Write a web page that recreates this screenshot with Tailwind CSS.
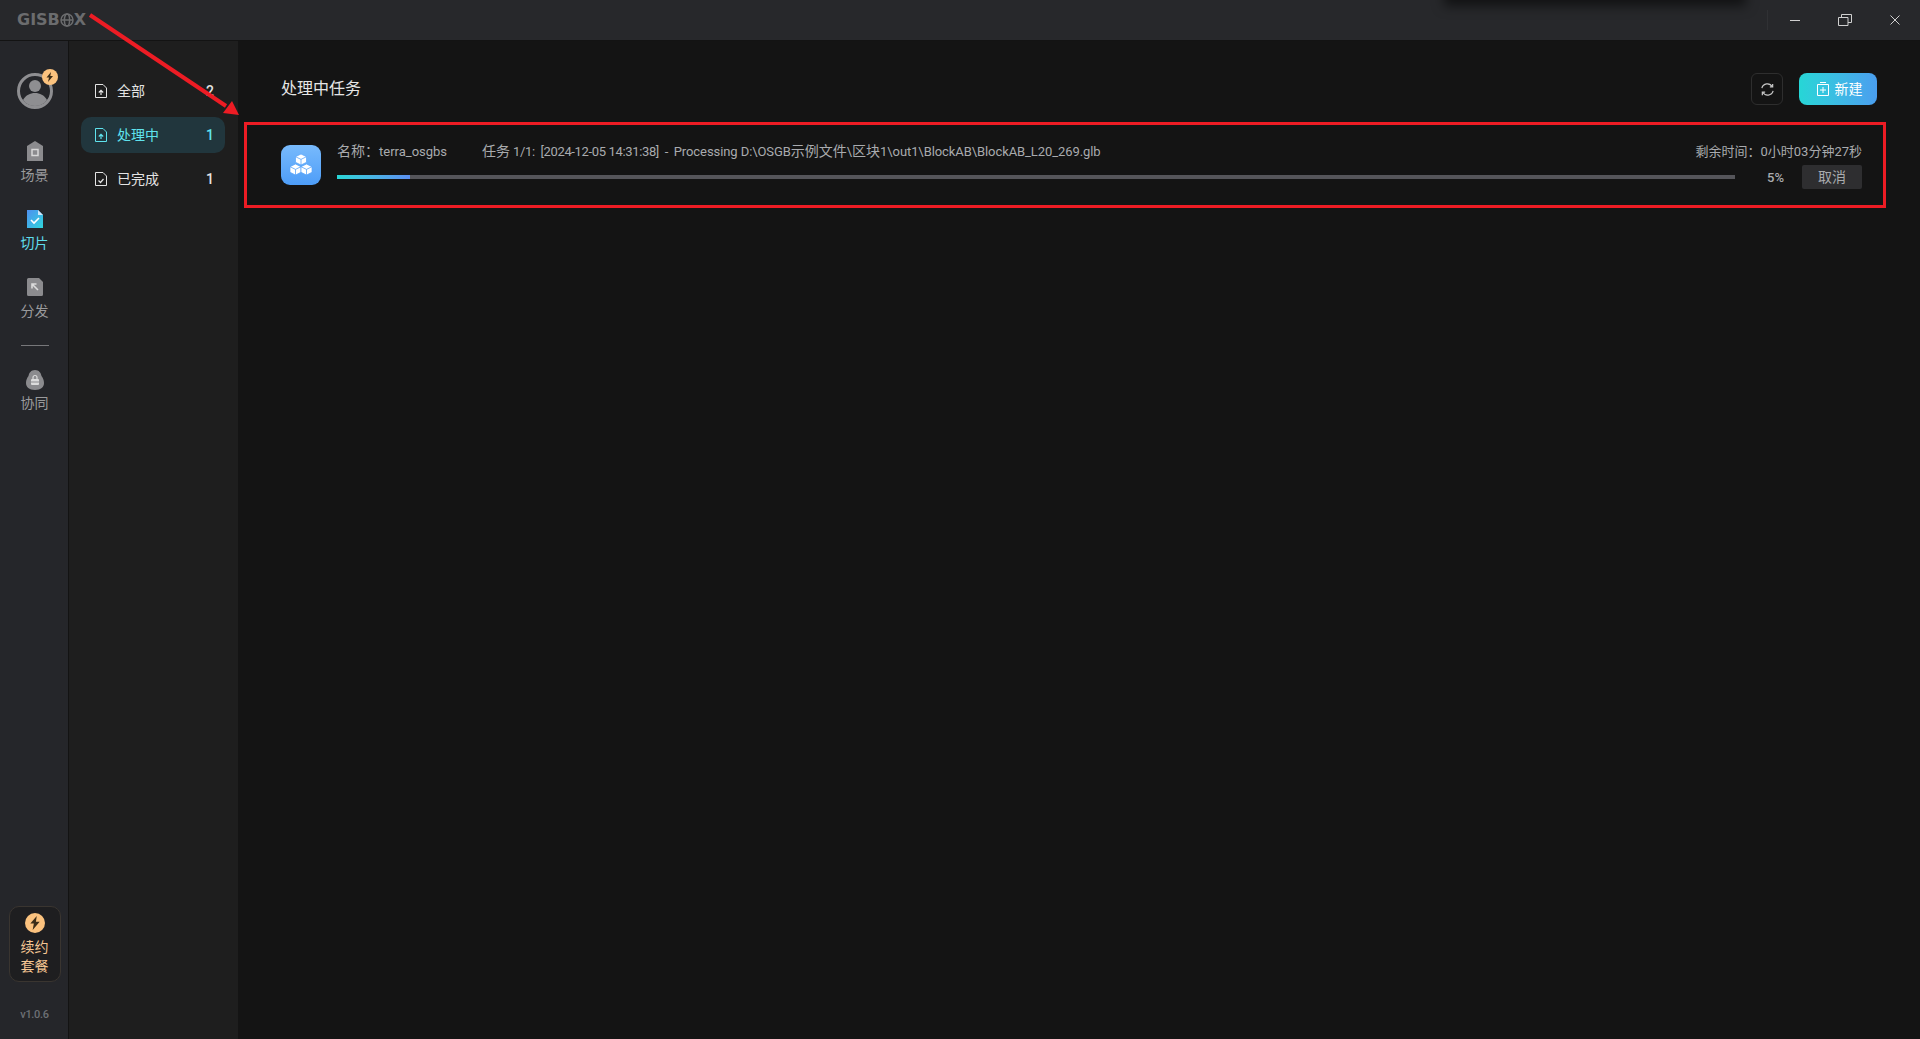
<!DOCTYPE html>
<html lang="zh-CN">
<head>
  <meta charset="UTF-8" />
  <title>GISBox</title>
  <script src="https://cdn.jsdelivr.net/npm/@tailwindcss/browser@4"></script>
</head>
<body class="bg-[#141414] overflow-hidden font-['Roboto','Noto_Sans_CJK_SC',sans-serif]">
  <div class="relative w-[1920px] h-[1039px] flex flex-col overflow-hidden">

    <!-- Title bar -->
    <header class="h-[41px] shrink-0 bg-[#27282b] border-b border-[#131313] flex items-center justify-between">
      <div class="pl-[17px] flex items-center text-[#6b6c6e] text-[16px] leading-none font-bold font-['DejaVu_Sans',sans-serif]">
        <span>GISB</span>
        <svg class="w-[14px] h-[14px]" viewBox="0 0 14 14" fill="none" stroke="#6b6c6e" stroke-width="1.500"><circle cx="7" cy="7" r="6"/><ellipse cx="7" cy="7" rx="2.600" ry="6"/><path d="M1 7h12"/></svg>
        <span>X</span>
      </div>
      <div class="flex items-center text-[#d0d0d0] pr-[20px] gap-[38px]">
        <div class="w-px h-[20px] bg-[#303134] mr-[-16px]"></div>
        <svg class="w-[10px] h-[10px]" viewBox="0 0 10 10" fill="none" stroke="currentColor"><path d="M0 5.500h10"/></svg>
        <svg class="w-[14px] h-[12px]" viewBox="0 0 14 12" fill="none" stroke="currentColor"><path d="M.5 3.500h9.500v8H.5z"/><path d="M3.500 3.500v-3h10v8h-3.500"/></svg>
        <svg class="w-[10px] h-[10px]" viewBox="0 0 10 10" fill="none" stroke="currentColor"><path d="M.5.500l9 9M9.500.500l-9 9"/></svg>
      </div>
    </header>

    <div class="flex flex-1 min-h-0">
      <!-- Icon rail -->
      <nav class="w-[69px] shrink-0 pl-[1px] bg-[#25262a] border-r border-[#131313] flex flex-col items-center text-[14px] leading-[18px] text-[#9a9a9c]">
        <div class="relative mt-[32px] w-[36px] h-[36px]">
          <svg class="w-[36px] h-[36px]" viewBox="0 0 36 36" fill="none"><circle cx="18" cy="18" r="16.500" stroke="#8e8e91" stroke-width="3"/><circle cx="18" cy="13" r="6" fill="#8e8e91"/><path d="M6 27c3-5 7-7 12-7s9 2 12 7c-3 4-7 6-12 6s-9-2-12-6z" fill="#8e8e91"/></svg>
          <span class="absolute -top-[4px] -right-[5px] w-[16px] h-[16px] rounded-full bg-[#fbc27e] flex items-center justify-center">
            <svg class="w-[10px] h-[10px]" viewBox="0 0 10 10" fill="#3b2c17"><path d="M6 0L1.500 5.500h2.500L3 10l5-6H5.300z"/></svg>
          </span>
        </div>

        <div class="mt-[32px] flex flex-col items-center gap-[5px]">
          <svg class="w-[16px] h-[20px]" viewBox="0 0 16 20"><path d="M8 0l8 5v15H0V5z" fill="#8b8b8e"/><rect x="5" y="8.500" width="6" height="6" fill="none" stroke="#d8d8d8" stroke-width="1.500"/></svg>
          <span>场景</span>
        </div>
        <div class="mt-[26px] flex flex-col items-center gap-[6px] text-[#5fdcec]">
          <svg class="w-[16px] h-[18px]" viewBox="0 0 16 18"><defs><linearGradient id="g1" x1="0" y1="0" x2="1" y2="1"><stop offset="0" stop-color="#4f8ff0"/><stop offset="1" stop-color="#2fd6dc"/></linearGradient></defs><path d="M0 0h11l5 5v13H0z" fill="url(#g1)"/><path d="M11 0l5 5h-5z" fill="#cfe6fb"/><path d="M4 10l3 3 5-5" fill="none" stroke="#fff" stroke-width="1.600"/></svg>
          <span>切片</span>
        </div>
        <div class="mt-[26px] flex flex-col items-center gap-[6px]">
          <svg class="w-[16px] h-[18px]" viewBox="0 0 16 18"><path d="M1.500 0H12l4 4v12.500a1.500 1.500 0 0 1-1.500 1.500h-13A1.500 1.500 0 0 1 0 16.500v-15A1.500 1.500 0 0 1 1.500 0z" fill="#8b8b8e"/><path d="M11 12L5 6M5 10.500V6h4.500" fill="none" stroke="#dcdcdc" stroke-width="1.600"/></svg>
          <span>分发</span>
        </div>
        <div class="mt-[25px] w-[28px] h-px bg-[#77777a]"></div>
        <div class="mt-[24px] flex flex-col items-center gap-[4px]">
          <svg class="w-[18px] h-[20px]" viewBox="0 0 18 20"><path d="M9 0c4 0 6 3 6.500 6 1.500 2 2.500 4 2.500 7 0 4-3 7-9 7s-9-3-9-7c0-3 1-5 2.500-7C3 3 5 0 9 0z" fill="#8b8b8e"/><rect x="5" y="9" width="8" height="6" rx="1" fill="#dcdcdc"/><path d="M7 9V7.500a2 2 0 0 1 4 0V9" fill="none" stroke="#dcdcdc" stroke-width="1.200"/><path d="M5 12h8" stroke="#8b8b8e"/></svg>
          <span>协同</span>
        </div>

        <div class="mt-auto w-[52px] h-[76px] rounded-[10px] bg-[#1e1e20] border border-[#3a3530] flex flex-col items-center pt-[6px] text-[#f5c693] leading-[19px]">
          <span class="w-[20px] h-[20px] rounded-full bg-[#fbc27e] flex items-center justify-center mb-[5px]">
            <svg class="w-[12px] h-[14px]" viewBox="0 0 10 12" fill="#3b2c17"><path d="M6.500 0L1 6.500h3L3 12l6-7H5.800z"/></svg>
          </span>
          <span>续约</span>
          <span>套餐</span>
        </div>
        <div class="mt-[26px] mb-[17px] text-[11px] leading-[14px] font-medium tracking-[-0.3px] text-[#6d7075]">v1.0.6</div>
      </nav>

      <!-- Task filter sidebar -->
      <aside class="w-[169px] shrink-0 bg-[#1e1e1e] pl-[12px] pr-[13px] pt-[32px] flex flex-col gap-[8px] text-[14px] text-[#e4e4e4]">
        <div class="h-[36px] rounded-[10px] pl-[14px] pr-[11px] flex items-center justify-between">
          <span class="flex items-center gap-[10px]">
            <svg class="w-[12px] h-[14px]" viewBox="0 0 12 14" fill="none" stroke="currentColor"><path d="M.5.500h7.500l3.500 3.500v9.500h-11z"/><path d="M6 11V6.500M3.800 8.500L6 6.300l2.200 2.200" stroke-width="1.200"/></svg>
            全部
          </span>
          <span class="font-medium">2</span>
        </div>
        <div class="h-[36px] rounded-[10px] pl-[14px] pr-[11px] flex items-center justify-between bg-[#21363d] text-[#5fe3ee]">
          <span class="flex items-center gap-[10px]">
            <svg class="w-[12px] h-[14px]" viewBox="0 0 12 14" fill="none" stroke="currentColor"><path d="M.5.500h7.500l3.500 3.500v9.500h-11z"/><path d="M6 11V6.500M3.800 8.500L6 6.300l2.200 2.200" stroke-width="1.200"/></svg>
            处理中
          </span>
          <span class="font-medium">1</span>
        </div>
        <div class="h-[36px] rounded-[10px] pl-[14px] pr-[11px] flex items-center justify-between">
          <span class="flex items-center gap-[10px]">
            <svg class="w-[12px] h-[14px]" viewBox="0 0 12 14" fill="none" stroke="currentColor"><path d="M.5.500h7.500l3.500 3.500v9.500h-11z"/><path d="M3.500 8.500l2 2 3-3.500" stroke-width="1.200"/></svg>
            已完成
          </span>
          <span class="font-medium">1</span>
        </div>
      </aside>

      <!-- Main -->
      <main class="flex-1 min-w-0 bg-[#141414] pl-[43px] pr-[43px] pt-[32px]">
        <div class="h-[32px] flex items-center justify-between">
          <h1 class="text-[16px] font-normal text-[#e6e6e6]">处理中任务</h1>
          <div class="flex items-center gap-[16px]">
            <button class="w-[32px] h-[32px] rounded-[6px] border border-[#2e2e2e] flex items-center justify-center">
              <svg class="w-[15px] h-[15px]" viewBox="0 0 16 16" fill="none" stroke="#c8c8c8" stroke-width="1.300"><path d="M2 6.500A6 6 0 0 1 13 5M14 9.500A6 6 0 0 1 3 11"/><path d="M13.500 2v3.300h-3M2.500 14v-3.300h3"/></svg>
            </button>
            <button class="w-[78px] h-[32px] rounded-[8px] pl-[3px] bg-linear-to-r from-[#26d6d6] to-[#4a9eef] flex items-center justify-center gap-[6px] text-[14px] text-white">
              <svg class="w-[12px] h-[14px]" viewBox="0 0 12 14" fill="none" stroke="#fff"><path d="M.5 2.500h11v11H.5zM3 .5h6"/><path d="M6 5v6M3 8h6"/></svg>
              新建
            </button>
          </div>
        </div>

        <!-- Task row -->
        <div class="mt-[40px] mr-[15px] flex gap-[16px] h-[44px]">
          <div class="w-[40px] h-[40px] shrink-0 rounded-[9px] bg-linear-to-b from-[#78bafc] to-[#4d9df8] flex items-center justify-center">
            <svg class="w-[24px] h-[24px]" viewBox="0 0 24 24">
              <g fill="#fff" stroke="#5aa5f9" stroke-width=".7">
                <path d="M12 1l5.500 2.700v5.600L12 12 6.500 9.300V3.700z"/>
                <path d="M6.500 11l5.500 2.700v5.600L6.500 22 1 19.300v-5.600z"/>
                <path d="M17.500 11l5.500 2.700v5.600L17.500 22 12 19.300v-5.600z"/>
              </g>
              <g fill="none" stroke="#5aa5f9" stroke-width=".8">
                <path d="M6.500 3.700L12 6.400l5.500-2.700M12 6.400V12"/>
                <path d="M1 13.700l5.500 2.700 5.500-2.700M6.500 16.400V22"/>
                <path d="M12 13.700l5.500 2.700 5.500-2.700M17.500 16.400V22"/>
              </g>
            </svg>
          </div>
          <div class="flex-1 min-w-0 text-[13px] text-[#a9abae]">
            <div class="h-[13px] flex items-center justify-between">
              <div class="flex gap-[35px] whitespace-nowrap">
                <span><span class="text-[14px]">名称：</span>terra_osgbs</span>
                <span><span class="tracking-[-0.35px]"><span class="text-[14px] tracking-normal">任务</span> 1/1:&nbsp; [2024-12-05 14:31:38]&nbsp; -&nbsp; </span><span class="tracking-[-0.08px]">Processing D:\OSGB<span class="text-[14px] tracking-normal">示例文件</span>\<span class="text-[14px] tracking-normal">区块</span>1\out1\BlockAB\BlockAB_L20_269.glb</span></span>
              </div>
              <span class="whitespace-nowrap">剩余时间：0小时03分钟27秒</span>
            </div>
            <div class="mt-[7px] flex items-start">
              <div class="w-[1398px] h-[4px] mt-[10px] bg-[#55555a]">
                <div class="h-full bg-linear-to-r from-[#26d6d6] to-[#5b8ff0]" style="width: 5.2%"></div>
              </div>
              <span class="ml-[32px] mt-[5px] text-[13px] leading-[16px] font-medium">5%</span>
              <button class="ml-auto w-[60px] h-[24px] rounded-[2px] bg-[#2e2e30] text-[14px] text-[#a9abae]">取消</button>
            </div>
          </div>
        </div>
      </main>
    </div>

    <!-- Window shadow peeking in at the top -->
    <div class="absolute -top-[8px] left-[1450px] w-[290px] h-[8px] shadow-[0_0_12px_6px_rgba(0,0,0,0.55)]"></div>

    <!-- Screenshot annotation: red box and arrow -->
    <div class="absolute left-[244px] top-[122px] w-[1642px] h-[86px] border-[3px] border-[#ed1c24]"></div>
    <svg class="absolute left-0 top-0 w-[260px] h-[130px]" viewBox="0 0 260 130">
      <path d="M90 15L226 106" stroke="#ed1c24" stroke-width="4" fill="none"/>
      <path d="M239 115L223 113 232 101z" fill="#ed1c24"/>
    </svg>
  </div>
</body>
</html>
